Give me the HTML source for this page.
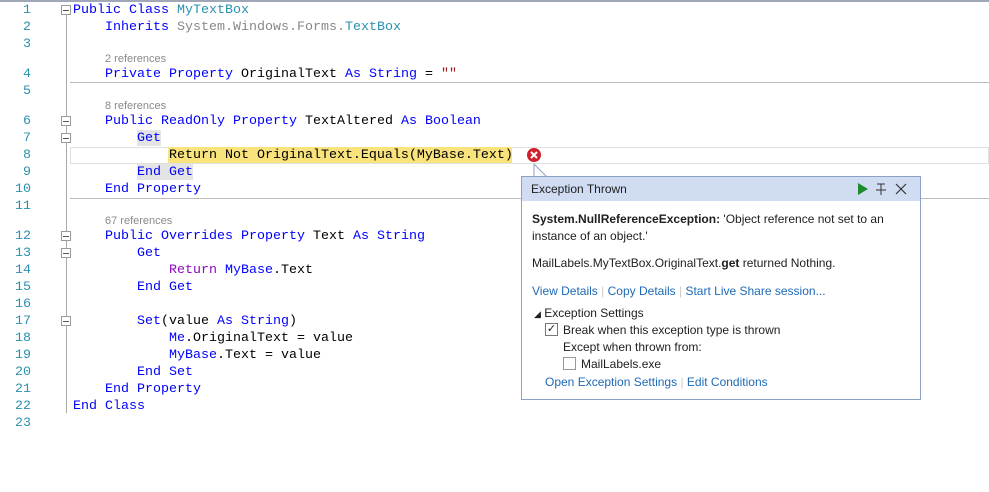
<!DOCTYPE html>
<html><head><style>
body{margin:0;width:989px;height:492px;background:#fff;position:relative;overflow:hidden;font-family:"Liberation Mono",monospace;font-size:13.33px}
.topbar{position:absolute;left:0;top:0;width:989px;height:2px;background:#a0a8b8}
.ln{position:absolute;left:0;width:31px;text-align:right;color:#2b91af;height:17px;line-height:17px}
.code{position:absolute;left:73px;white-space:pre;height:17px;line-height:17px;color:#000}
.lens{position:absolute;font-family:"Liberation Sans",sans-serif;font-size:11px;color:#8a8a8a;height:13px;line-height:13px;left:105px}
.k{color:#0000ff}.t{color:#2b91af}.g{color:#888}.s{color:#a31515}.m{color:#8f08c4}
.fold{position:absolute;left:61px;width:8px;height:8px;border:1px solid #999;background:#fff}
.fold:after{content:"";position:absolute;left:1px;top:3.5px;width:6px;height:1px;background:#555}
.vl{position:absolute;left:66px;width:1px;background:#aaa}
.hl{position:absolute;left:70px;right:0;height:1px;background:#bbb}
a{color:#1e6ab7;text-decoration:none}
.pop{position:absolute;left:521px;top:176px;width:398px;height:222px;border:1px solid #8aa0c4;background:#fff;font-family:"Liberation Sans",sans-serif;font-size:12px;color:#1e1e1e}
.hdr{height:24px;background:#cfdcf2;line-height:24px;padding-left:9px}
</style></head><body>
<div class="topbar"></div>
<div class="vl" style="top:15px;height:398px"></div>
<div class="hl" style="top:82px"></div>
<div class="hl" style="top:198px"></div>
<div style="position:absolute;left:70px;right:0;top:147px;height:15px;border:1px solid #e0e0e0"></div>
<div style="position:absolute;left:137px;top:130px;width:24px;height:16px;background:#e4e4e4"></div>
<div style="position:absolute;left:137px;top:164px;width:56px;height:16px;background:#e4e4e4"></div>
<div style="position:absolute;left:168px;top:147px;width:344px;height:16px;background:#f9e37c"></div>

<div class="fold" style="top:5px"></div>
<div class="fold" style="top:116px"></div>
<div class="fold" style="top:133px"></div>
<div class="fold" style="top:231px"></div>
<div class="fold" style="top:248px"></div>
<div class="fold" style="top:316px"></div>

<div class="ln" style="top:2px">1</div><div class="code" style="top:2px"><span class="k">Public Class</span> <span class="t">MyTextBox</span></div>
<div class="ln" style="top:19px">2</div><div class="code" style="top:19px">    <span class="k">Inherits</span> <span class="g">System.Windows.Forms.</span><span class="t">TextBox</span></div>
<div class="ln" style="top:36px">3</div>
<div class="lens" style="top:53px">2 references</div>
<div class="ln" style="top:66px">4</div><div class="code" style="top:66px">    <span class="k">Private Property</span> OriginalText <span class="k">As String</span> = <span class="s">""</span></div>
<div class="ln" style="top:83px">5</div>
<div class="lens" style="top:100px">8 references</div>
<div class="ln" style="top:113px">6</div><div class="code" style="top:113px">    <span class="k">Public ReadOnly Property</span> TextAltered <span class="k">As Boolean</span></div>
<div class="ln" style="top:130px">7</div><div class="code" style="top:130px">        <span class="k">Get</span></div>
<div class="ln" style="top:147px">8</div><div class="code" style="top:147px">            Return Not OriginalText.Equals(MyBase.Text)</div>
<div class="ln" style="top:164px">9</div><div class="code" style="top:164px">        <span class="k">End Get</span></div>
<div class="ln" style="top:181px">10</div><div class="code" style="top:181px">    <span class="k">End Property</span></div>
<div class="ln" style="top:198px">11</div>
<div class="lens" style="top:215px">67 references</div>
<div class="ln" style="top:228px">12</div><div class="code" style="top:228px">    <span class="k">Public Overrides Property</span> Text <span class="k">As String</span></div>
<div class="ln" style="top:245px">13</div><div class="code" style="top:245px">        <span class="k">Get</span></div>
<div class="ln" style="top:262px">14</div><div class="code" style="top:262px">            <span class="m">Return</span> <span class="k">MyBase</span>.Text</div>
<div class="ln" style="top:279px">15</div><div class="code" style="top:279px">        <span class="k">End Get</span></div>
<div class="ln" style="top:296px">16</div>
<div class="ln" style="top:313px">17</div><div class="code" style="top:313px">        <span class="k">Set</span>(value <span class="k">As String</span>)</div>
<div class="ln" style="top:330px">18</div><div class="code" style="top:330px">            <span class="k">Me</span>.OriginalText = value</div>
<div class="ln" style="top:347px">19</div><div class="code" style="top:347px">            <span class="k">MyBase</span>.Text = value</div>
<div class="ln" style="top:364px">20</div><div class="code" style="top:364px">        <span class="k">End Set</span></div>
<div class="ln" style="top:381px">21</div><div class="code" style="top:381px">    <span class="k">End Property</span></div>
<div class="ln" style="top:398px">22</div><div class="code" style="top:398px"><span class="k">End Class</span></div>
<div class="ln" style="top:415px">23</div>

<svg style="position:absolute;left:526px;top:147px" width="16" height="16"><circle cx="8" cy="8" r="7" fill="#d0202e"/><path d="M5 5L11 11M11 5L5 11" stroke="#fff" stroke-width="2"/></svg>
<svg style="position:absolute;left:533px;top:164px" width="20" height="14"><path d="M1 0L1 13L14 13Z" fill="#fff" stroke="#8aa0c4"/><path d="M2 13L14 13" stroke="#cfdcf2" stroke-width="1.5"/></svg>
<div class="pop">
<div class="hdr">Exception Thrown
<svg style="position:absolute;right:6px;top:5px" width="60" height="14"><path d="M4 1L14 7L4 13Z" fill="#1e8a2e"/><path d="M23 2H31M27 2V8M22 8H32M27 8V13" stroke="#333" fill="none"/><path d="M42 2L52 12M52 2L42 12" stroke="#333" stroke-width="1.2"/></svg></div>
<div style="position:absolute;left:10px;top:34px;width:380px;line-height:17px"><b>System.NullReferenceException:</b> 'Object reference not set to an instance of an object.'</div>
<div style="position:absolute;left:10px;top:79px">MailLabels.MyTextBox.OriginalText.<b>get</b> returned Nothing.</div>
<div style="position:absolute;left:10px;top:107px"><a>View Details</a> <span style="color:#ccc">|</span> <a>Copy Details</a> <span style="color:#ccc">|</span> <a>Start Live Share session...</a></div>
<div style="position:absolute;left:12px;top:129px"><span style="font-size:9px">◢</span> Exception Settings</div>
<div style="position:absolute;left:23px;top:146px;width:11px;height:11px;border:1px solid #777;font-size:11px;line-height:11px;text-align:center">✓</div>
<div style="position:absolute;left:41px;top:146px">Break when this exception type is thrown</div>
<div style="position:absolute;left:41px;top:163px">Except when thrown from:</div>
<div style="position:absolute;left:41px;top:180px;width:11px;height:11px;border:1px solid #999"></div>
<div style="position:absolute;left:59px;top:180px">MailLabels.exe</div>
<div style="position:absolute;left:23px;top:198px"><a>Open Exception Settings</a> <span style="color:#ccc">|</span> <a>Edit Conditions</a></div>
</div>
</body></html>
